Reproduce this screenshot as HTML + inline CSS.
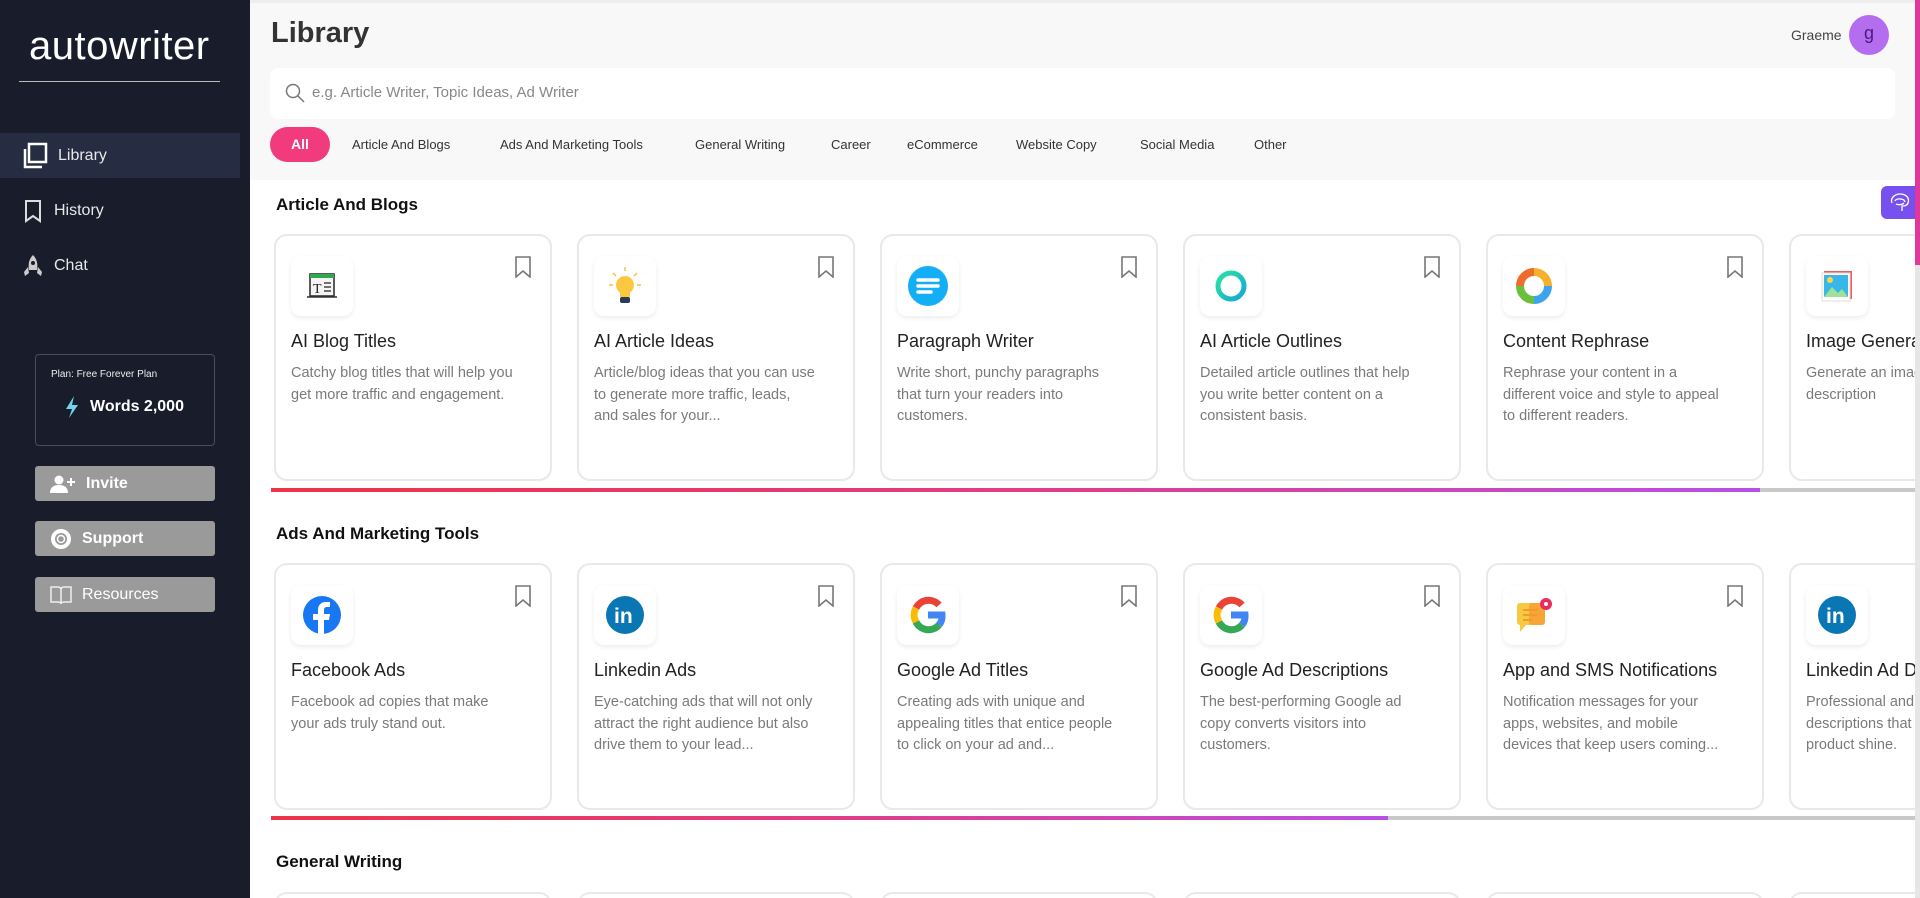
<!DOCTYPE html>
<html><head><meta charset="utf-8">
<style>
*{box-sizing:border-box;margin:0;padding:0}
html,body{width:1920px;height:898px;overflow:hidden}
body{font-family:"Liberation Sans",sans-serif;background:#fff;position:relative}
.side{position:absolute;left:0;top:0;width:250px;height:898px;background:#181c2b;color:#fff}
.logo{position:absolute;left:29px;top:24px;font-size:40px;letter-spacing:0.5px;color:#fff;font-weight:normal}
.hr{position:absolute;left:19px;top:81px;width:201px;height:1px;background:#bbb}
.nav{position:absolute;left:0;width:240px;height:45px;display:flex;align-items:center;padding-left:22px;font-size:16px;color:#e8e8e8}
.nav svg{margin-right:10px}
.plan{position:absolute;left:35px;top:354px;width:180px;height:92px;border:1px solid #4a4e5c;border-radius:4px}
.btn{position:absolute;left:35px;width:180px;height:35px;background:#9a9a9a;border-radius:3px;color:#fff;font-size:16px;font-weight:bold;display:flex;align-items:center;padding-left:15px}
.btn svg{margin-right:10px}
.main{position:absolute;left:250px;top:0;width:1670px;height:898px;overflow:hidden}
.head{position:absolute;left:0;top:0;width:1666px;height:180px;background:#f8f8f8;border-top:3px solid #eee}
.title{position:absolute;left:21px;top:14px;font-size:29px;font-weight:bold;color:#333}
.search{position:absolute;left:20px;top:65px;width:1625px;height:51px;background:#fff;border-radius:8px}
.search span{position:absolute;left:42px;top:16px;font-size:15px;color:#888}
.chip{position:absolute;top:134px;font-size:13px;color:#333}
.all{position:absolute;left:20px;top:124px;width:60px;height:35px;background:#f23b7c;border-radius:18px;color:#fff;font-weight:bold;font-size:14px;text-align:center;line-height:35px}
.sec{position:absolute;left:26px;font-size:17px;font-weight:bold;color:#111}
.card{position:absolute;width:278px;height:247px;border:2px solid #e9e9e9;border-radius:13px;background:#fff}
.ic{position:absolute;left:15px;top:20px;width:62px;height:60px;border-radius:10px;background:#fff;box-shadow:0 2px 5px rgba(0,0,0,.08);display:flex;align-items:center;justify-content:center}
.bm{position:absolute;right:18px;top:20px}
.ct{position:absolute;left:15px;top:95px;font-size:18px;color:#222;white-space:nowrap}
.cd{position:absolute;left:15px;top:127px;width:222px;font-size:14.5px;line-height:21.5px;color:#7a7a7a;display:-webkit-box;-webkit-line-clamp:3;-webkit-box-orient:vertical;overflow:hidden}
.bar{position:absolute;left:21px;height:4px;width:1645px;background:#c8c8c8}
.bar i{position:absolute;left:0;top:0;height:4px;background:linear-gradient(90deg,#ee3348,#e23c84 50%,#b94fe6)}
</style></head><body>
<div class="side">
<div class="logo">autowriter</div>
<div class="hr"></div>
<div class="nav" style="top:133px;background:#262c42;width:240px"><svg width="26" height="28" viewBox="0 0 26 28" fill="none" stroke="#fff" stroke-width="2.5"><rect x="7" y="2" width="17" height="18"/><path d="M3 7v18h17"/></svg>Library</div>
<div class="nav" style="top:188px"><svg width="22" height="24" viewBox="0 0 22 24" fill="none" stroke="#ddd" stroke-width="2"><path d="M4 2h14v20l-7-5-7 5z"/></svg>History</div>
<div class="nav" style="top:243px"><svg width="22" height="24" viewBox="0 0 22 24" fill="#ccc"><path d="M11 1c4 4 5 9 4 15H7C6 10 7 5 11 1z"/><path d="M6 13l-4 5 1 4 4-3zM16 13l4 5-1 4-4-3z"/><circle cx="11" cy="9" r="2" fill="#181c2b"/></svg>Chat</div>
<div class="plan"><div style="position:absolute;left:15px;top:14px;font-size:10px;color:#eee">Plan: Free Forever Plan</div>
<div style="position:absolute;left:28px;top:40px;font-size:16px;font-weight:bold;color:#fff;display:flex;align-items:center"><svg width="16" height="24" viewBox="0 0 16 24"><path d="M10 1L2 14h6l-3 9 9-13H8z" fill="#6fd6ee"/></svg><span style="margin-left:10px">Words 2,000</span></div></div>
<div class="btn" style="top:466px"><svg width="26" height="18" viewBox="0 0 26 18" fill="#fff"><circle cx="9" cy="5" r="4.5"/><path d="M0 18c0-6 4-8 9-8s9 2 9 8z"/><path d="M21 3v8M17 7h8" stroke="#fff" stroke-width="2"/></svg>Invite</div>
<div class="btn" style="top:521px"><svg width="22" height="22" viewBox="0 0 22 22" fill="none" stroke="#fff" stroke-width="4"><circle cx="11" cy="11" r="8"/><circle cx="11" cy="11" r="3.5" stroke-width="1.5"/></svg>Support</div>
<div class="btn" style="top:577px;font-weight:normal"><svg width="22" height="20" viewBox="0 0 22 20" fill="none" stroke="#eee" stroke-width="1.5"><path d="M1 2h7c2 0 3 1 3 3v14c0-1-1-2-3-2H1zM21 2h-7c-2 0-3 1-3 3v14c0-1 1-2 3-2h7z"/></svg>Resources</div>
</div>
<div class="main">
<div class="head">
<div class="title">Library</div>
<div style="position:absolute;left:1541px;top:24px;font-size:14px;color:#444">Graeme</div>
<div style="position:absolute;left:1599px;top:12px;width:40px;height:40px;border-radius:50%;background:#b56df0;color:#4a1a80;font-size:18px;text-align:center;line-height:36px">g</div>
<div class="search"><svg style="position:absolute;left:15px;top:15px" width="20" height="20" viewBox="0 0 20 20" fill="none" stroke="#777" stroke-width="1.5"><circle cx="8" cy="8" r="6.5"/><path d="M13 13l6 6"/></svg><span>e.g. Article Writer, Topic Ideas, Ad Writer</span></div>
<div class="all">All</div>
<div class="chip" style="left:102px">Article And Blogs</div>
<div class="chip" style="left:250px">Ads And Marketing Tools</div>
<div class="chip" style="left:445px">General Writing</div>
<div class="chip" style="left:581px">Career</div>
<div class="chip" style="left:657px">eCommerce</div>
<div class="chip" style="left:766px">Website Copy</div>
<div class="chip" style="left:890px">Social Media</div>
<div class="chip" style="left:1004px">Other</div>
</div>
<div style="position:absolute;left:1631px;top:186px;width:35px;height:33px;background:#7950f0;border-radius:6px 0 0 6px"><svg style="margin:7px 0 0 8px" width="22" height="20" viewBox="0 0 22 20" fill="none" stroke="#fff" stroke-width="1.3"><path d="M3 10c-2-5 3-9 8-9s10 3 8 9c-1 3-4 3-6 3v5M6 8c1-3 9-3 10 1M7 11c2 1 6 1 8-1"/></svg></div>

<div class="sec" style="top:195px">Article And Blogs</div>
<div class="card" style="left:24px;top:234px"><div class="ic"><svg width="34" height="30" viewBox="0 0 34 30"><rect x="5" y="3" width="24" height="22" fill="#f4f4f4" stroke="#333" stroke-width="1.6"/><rect x="5" y="3" width="24" height="4" fill="#2fa84f"/><text x="8" y="22" font-size="14" font-family="Liberation Serif" fill="#222">T</text><path d="M19 12h7M19 16h7M19 20h7" stroke="#222" stroke-width="1.3"/><path d="M2 26h30" stroke="#333" stroke-width="1.6"/></svg></div><svg class="bm" width="18" height="22" viewBox="0 0 18 22" fill="none" stroke="#777" stroke-width="1.6"><path d="M2 1h14v20l-7-6-7 6z"/></svg><div class="ct">AI Blog Titles</div><div class="cd">Catchy blog titles that will help you get more traffic and engagement.</div></div>
<div class="card" style="left:327px;top:234px"><div class="ic"><svg width="34" height="42" viewBox="0 0 34 42"><path d="M17 2v4M5 8l3 3M29 8l-3 3M1 20h4M29 20h4" stroke="#f7c146" stroke-width="1.5"/><circle cx="17" cy="20" r="9" fill="#fbc941"/><rect x="12" y="27" width="10" height="5" fill="#fbc941"/><rect x="12" y="32" width="10" height="6" rx="2" fill="#2b3a57"/></svg></div><svg class="bm" width="18" height="22" viewBox="0 0 18 22" fill="none" stroke="#777" stroke-width="1.6"><path d="M2 1h14v20l-7-6-7 6z"/></svg><div class="ct">AI Article Ideas</div><div class="cd">Article/blog ideas that you can use to generate more traffic, leads, and sales for your...</div></div>
<div class="card" style="left:630px;top:234px"><div class="ic"><svg width="42" height="42" viewBox="0 0 42 42"><circle cx="21" cy="21" r="20" fill="#13aef5"/><path d="M11 15h20M11 21h20M11 27h13" stroke="#fff" stroke-width="3.5" stroke-linecap="round"/></svg></div><svg class="bm" width="18" height="22" viewBox="0 0 18 22" fill="none" stroke="#777" stroke-width="1.6"><path d="M2 1h14v20l-7-6-7 6z"/></svg><div class="ct">Paragraph Writer</div><div class="cd">Write short, punchy paragraphs that turn your readers into customers.</div></div>
<div class="card" style="left:933px;top:234px"><div class="ic"><svg width="34" height="34" viewBox="0 0 34 34"><defs><linearGradient id="g1" x1="0" y1="0" x2="1" y2="1"><stop offset="0" stop-color="#29e3a0"/><stop offset="1" stop-color="#14a8d8"/></linearGradient></defs><circle cx="17" cy="17" r="13" fill="none" stroke="url(#g1)" stroke-width="5"/></svg></div><svg class="bm" width="18" height="22" viewBox="0 0 18 22" fill="none" stroke="#777" stroke-width="1.6"><path d="M2 1h14v20l-7-6-7 6z"/></svg><div class="ct">AI Article Outlines</div><div class="cd">Detailed article outlines that help you write better content on a consistent basis.</div></div>
<div class="card" style="left:1236px;top:234px"><div class="ic"><svg width="40" height="40" viewBox="0 0 40 40" fill="none" stroke-width="8"><path d="M20 6a14 14 0 0 1 14 14" stroke="#f7b02c"/><path d="M34 20a14 14 0 0 1-14 14" stroke="#3ea3ee"/><path d="M20 34A14 14 0 0 1 6 20" stroke="#6bbf3c"/><path d="M6 20A14 14 0 0 1 20 6" stroke="#ef6d2c"/></svg></div><svg class="bm" width="18" height="22" viewBox="0 0 18 22" fill="none" stroke="#777" stroke-width="1.6"><path d="M2 1h14v20l-7-6-7 6z"/></svg><div class="ct">Content Rephrase</div><div class="cd">Rephrase your content in a different voice and style to appeal to different readers.</div></div>
<div class="card" style="left:1539px;top:234px"><div class="ic"><svg width="36" height="36" viewBox="0 0 36 36"><rect x="5" y="3" width="28" height="28" fill="#f05b5b"/><rect x="3" y="5" width="28" height="28" fill="#fff" stroke="#ddd"/><rect x="5" y="7" width="24" height="22" fill="#38b8e8"/><circle cx="11" cy="12" r="3" fill="#f9d64a"/><path d="M5 29l8-10 6 6 4-4 6 8z" fill="#9fe09a"/></svg></div><div class="ct">Image Generator</div><div class="cd">Generate an image from a description</div></div>
<div class="bar" style="top:488px"><i style="width:1489px"></i></div>

<div class="sec" style="top:524px">Ads And Marketing Tools</div>
<div class="card" style="left:24px;top:563px"><div class="ic"><svg width="40" height="40" viewBox="0 0 40 40"><circle cx="20" cy="20" r="19" fill="#1877f2"/><path d="M22 39V25h5l1-6h-6v-4c0-2 1-3 3-3h3V7h-4c-5 0-8 3-8 8v4h-5v6h5v14z" fill="#fff"/></svg></div><svg class="bm" width="18" height="22" viewBox="0 0 18 22" fill="none" stroke="#777" stroke-width="1.6"><path d="M2 1h14v20l-7-6-7 6z"/></svg><div class="ct">Facebook Ads</div><div class="cd">Facebook ad copies that make your ads truly stand out.</div></div>
<div class="card" style="left:327px;top:563px"><div class="ic"><svg width="40" height="40" viewBox="0 0 40 40"><circle cx="20" cy="20" r="19" fill="#0a77b5"/><text x="9" y="28" font-size="21" font-weight="bold" font-family="Liberation Sans" fill="#fff">in</text></svg></div><svg class="bm" width="18" height="22" viewBox="0 0 18 22" fill="none" stroke="#777" stroke-width="1.6"><path d="M2 1h14v20l-7-6-7 6z"/></svg><div class="ct">Linkedin Ads</div><div class="cd">Eye-catching ads that will not only attract the right audience but also drive them to your lead...</div></div>
<div class="card" style="left:630px;top:563px"><div class="ic"><svg width="40" height="40" viewBox="0 0 40 40" fill="none" stroke-width="7"><path d="M31 10A14 14 0 0 0 8 13" stroke="#ea4335"/><path d="M8 13a14 14 0 0 0 0 14" stroke="#fbbc05"/><path d="M8 27a14 14 0 0 0 23 3" stroke="#34a853"/><path d="M31 30a14 14 0 0 0 3-10H20" stroke="#4285f4"/></svg></div><svg class="bm" width="18" height="22" viewBox="0 0 18 22" fill="none" stroke="#777" stroke-width="1.6"><path d="M2 1h14v20l-7-6-7 6z"/></svg><div class="ct">Google Ad Titles</div><div class="cd">Creating ads with unique and appealing titles that entice people to click on your ad and...</div></div>
<div class="card" style="left:933px;top:563px"><div class="ic"><svg width="40" height="40" viewBox="0 0 40 40" fill="none" stroke-width="7"><path d="M31 10A14 14 0 0 0 8 13" stroke="#ea4335"/><path d="M8 13a14 14 0 0 0 0 14" stroke="#fbbc05"/><path d="M8 27a14 14 0 0 0 23 3" stroke="#34a853"/><path d="M31 30a14 14 0 0 0 3-10H20" stroke="#4285f4"/></svg></div><svg class="bm" width="18" height="22" viewBox="0 0 18 22" fill="none" stroke="#777" stroke-width="1.6"><path d="M2 1h14v20l-7-6-7 6z"/></svg><div class="ct">Google Ad Descriptions</div><div class="cd">The best-performing Google ad copy converts visitors into customers.</div></div>
<div class="card" style="left:1236px;top:563px"><div class="ic"><svg width="42" height="40" viewBox="0 0 42 40"><rect x="4" y="8" width="28" height="22" rx="3" fill="#f7c843"/><rect x="16" y="8" width="16" height="22" rx="3" fill="#f7a534"/><path d="M7 30v7l6-7z" fill="#f7c843"/><path d="M10 15h14M10 20h14M10 25h9" stroke="#f29a2e" stroke-width="2"/><circle cx="33" cy="9" r="6" fill="#ec2b5e"/><circle cx="33" cy="9" r="2" fill="#fff"/></svg></div><svg class="bm" width="18" height="22" viewBox="0 0 18 22" fill="none" stroke="#777" stroke-width="1.6"><path d="M2 1h14v20l-7-6-7 6z"/></svg><div class="ct">App and SMS Notifications</div><div class="cd">Notification messages for your apps, websites, and mobile devices that keep users coming...</div></div>
<div class="card" style="left:1539px;top:563px"><div class="ic"><svg width="40" height="40" viewBox="0 0 40 40"><circle cx="20" cy="20" r="19" fill="#0a77b5"/><text x="9" y="28" font-size="21" font-weight="bold" font-family="Liberation Sans" fill="#fff">in</text></svg></div><div class="ct">Linkedin Ad Descriptions</div><div class="cd">Professional and eye-catching descriptions that make your product shine.</div></div>
<div class="bar" style="top:816px"><i style="width:1117px"></i></div>

<div class="sec" style="top:852px">General Writing</div>
<div class="card" style="left:24px;top:892px"></div>
<div class="card" style="left:327px;top:892px"></div>
<div class="card" style="left:630px;top:892px"></div>
<div class="card" style="left:933px;top:892px"></div>
<div class="card" style="left:1236px;top:892px"></div>
<div class="card" style="left:1539px;top:892px"></div>
</div>
<div style="position:absolute;left:1915px;top:0;width:5px;height:898px;background:#e6e6e6"></div>
<div style="position:absolute;left:1915px;top:0;width:5px;height:265px;background:#e0389a"></div>
</body></html>
